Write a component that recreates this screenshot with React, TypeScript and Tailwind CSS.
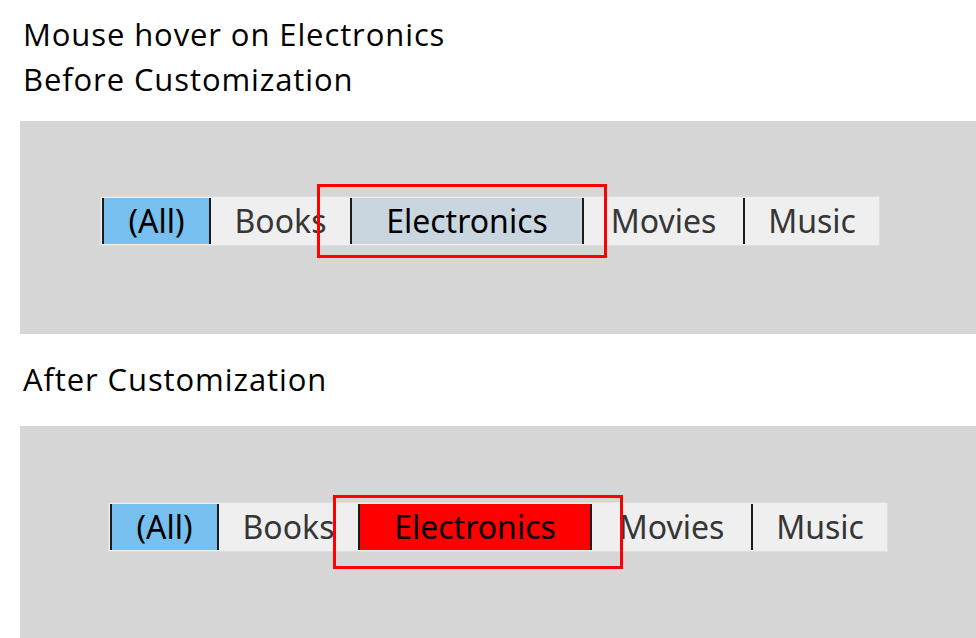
import React from "react";

/* ── Types ───────────────────────────────────────────────────────────── */

type Mode = "hover" | "custom";

const tabs = [
  { label: "(All)", width: "w-[105px]" },
  { label: "Books", width: "w-[139px]" },
  { label: "Electronics", width: "w-[230px]" },
  { label: "Movies", width: "w-[159px]" },
  { label: "Music", width: "w-[134px]" },
];

/* ── Tab bar ─────────────────────────────────────────────────────────── */

function Divider() {
  return <div className="my-[1px] w-[2px] shrink-0 bg-[#1c1c1c]" />;
}

function TabBar({ mode }: { mode: Mode }) {
  return (
    <div
      className="flex h-[50px] w-[780px] border border-[#dedede] bg-[#efefef] pl-[1px]"
      style={{ fontFamily: '"Noto Sans", "Open Sans", sans-serif' }}
    >
      <Divider />
      {tabs.map((tab, i) => {
        const selected = i === 0;
        const active = i === 2;
        let cell = "text-[#363636]";
        if (selected) cell = "bg-[#77bfee] text-black";
        if (active)
          cell =
            mode === "hover"
              ? "bg-[#c9d6e0] text-black"
              : "bg-[#ff0000] text-black";
        return (
          <React.Fragment key={tab.label}>
            <div className={`flex shrink-0 ${tab.width} py-[1px]`}>
              <div
                className={`flex flex-1 items-center justify-center text-[32px] leading-none ${cell}`}
              >
                {tab.label}
              </div>
            </div>
            {i < tabs.length - 1 && <Divider />}
          </React.Fragment>
        );
      })}
    </div>
  );
}

/* ── Panel ───────────────────────────────────────────────────────────── */

function Panel({ mode }: { mode: Mode }) {
  const hover = mode === "hover";
  return (
    <div
      className={`relative ml-[20px] bg-[#d6d6d6] ${
        hover ? "h-[213px] pl-[80px] pt-[75px]" : "h-[212px] pl-[88px] pt-[76px]"
      }`}
    >
      <TabBar mode={mode} />
      {/* highlight box */}
      <div
        className={`absolute w-[290px] border-[3px] border-[#ff0000] ${
          hover ? "left-[297px] top-[63px] h-[74px]" : "left-[313px] top-[69px] h-[74px]"
        }`}
      />
    </div>
  );
}

/* ── Component ───────────────────────────────────────────────────────── */

export default function App() {
  return (
    <div
      className="h-[638px] w-[976px] overflow-hidden bg-white"
      style={{ fontFamily: '"Open Sans", "Noto Sans", sans-serif' }}
    >
      <div className="pl-[23px] pt-[12px] text-[31px] leading-[45px] tracking-[0.9px] text-black">
        <p>Mouse hover on Electronics</p>
        <p>Before Customization</p>
      </div>
      <div className="mt-[19px]">
        <Panel mode="hover" />
      </div>
      <p className="pl-[23px] pt-[23px] text-[31px] leading-[45px] tracking-[0.9px] text-black">
        After Customization
      </p>
      <div className="mt-[24px]">
        <Panel mode="custom" />
      </div>
    </div>
  );
}
